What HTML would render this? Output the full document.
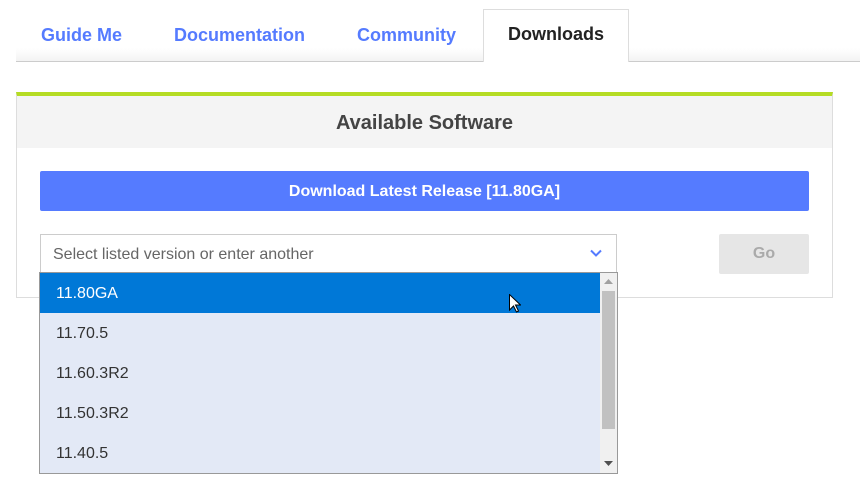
<!DOCTYPE html>
<html><head><style>
body{margin:0;width:860px;height:503px;background:#fff;font-family:"Liberation Sans",sans-serif;position:relative;overflow:hidden}
.tabs{position:absolute;left:16px;top:0;width:844px;height:61px;border-bottom:1px solid #ccc;background:linear-gradient(#fff 48px,#f3f3f3 61px)}
.tab{position:absolute;top:25px;font-weight:bold;font-size:18px;color:#557bff}
.dl{position:absolute;left:483px;top:9px;width:146px;height:53px;background:#fff;border:1px solid #ddd;border-bottom:none;box-sizing:border-box;text-align:center;line-height:49px;font-weight:bold;font-size:18px;color:#222}
.panel{position:absolute;left:16px;top:92px;width:817px;height:206px;border:1px solid #ddd;border-top:4px solid #b5dc24;box-sizing:border-box}
.hd{height:52px;background:#f4f4f4;text-align:center;line-height:54px;font-weight:bold;font-size:20px;color:#444}
.btn{position:absolute;left:40px;top:171px;width:769px;height:40px;background:#557bff;border-radius:2px;color:#fff;font-weight:bold;font-size:16px;text-align:center;line-height:41px}
.sel{position:absolute;left:40px;top:234px;width:577px;height:39px;border:1px solid #ccc;box-sizing:border-box;background:#fff;font-size:16px;color:#666;line-height:40px;padding-left:12px}
.go{position:absolute;left:719px;top:234px;width:90px;height:40px;background:#e6e6e6;border-radius:2px;color:#aaa;font-weight:bold;font-size:16px;text-align:center;line-height:40px}
.list{position:absolute;left:39px;top:272px;width:579px;height:202px;border:1px solid #999;box-sizing:border-box;background:#e3e9f6}
.it{height:40px;line-height:42px;padding-left:16px;font-size:16px;color:#333;width:544px}
.it.s{background:#0078d7;color:#fff}
.sb{position:absolute;right:0;top:0;width:17px;height:200px;background:#f0f0f0}
.th{position:absolute;left:2px;top:18px;width:13px;height:138px;background:#c1c1c1}
</style></head><body>
<div class="tabs"></div>
<div class="tab" style="left:41px">Guide Me</div>
<div class="tab" style="left:174px">Documentation</div>
<div class="tab" style="left:357px">Community</div>
<div class="dl">Downloads</div>
<div class="panel"><div class="hd">Available Software</div></div>
<div class="btn">Download Latest Release [11.80GA]</div>
<div class="sel">Select listed version or enter another
<svg style="position:absolute;right:14px;top:14px" width="12" height="8" viewBox="0 0 12 8"><path d="M1 1.5L6 6.5L11 1.5" stroke="#557bff" stroke-width="2" fill="none"/></svg></div>
<div class="go">Go</div>
<div class="list">
<div class="it s">11.80GA</div><div class="it">11.70.5</div><div class="it">11.60.3R2</div><div class="it">11.50.3R2</div><div class="it">11.40.5</div>
<div class="sb"><svg style="position:absolute;left:4px;top:6px" width="9" height="5"><path d="M0 5L4.5 0L9 5Z" fill="#a0a0a0"/></svg><div class="th"></div><svg style="position:absolute;left:4px;top:188px" width="9" height="5"><path d="M0 0L4.5 5L9 0Z" fill="#505050"/></svg></div>
</div>
<svg style="position:absolute;left:509px;top:294px" width="12" height="19" viewBox="0 0 12 19"><path d="M0.5 0.5V16L4.5 12L7.5 18L9.5 17L6.5 11H11.5Z" fill="#fff" stroke="#000"/></svg>
</body></html>
